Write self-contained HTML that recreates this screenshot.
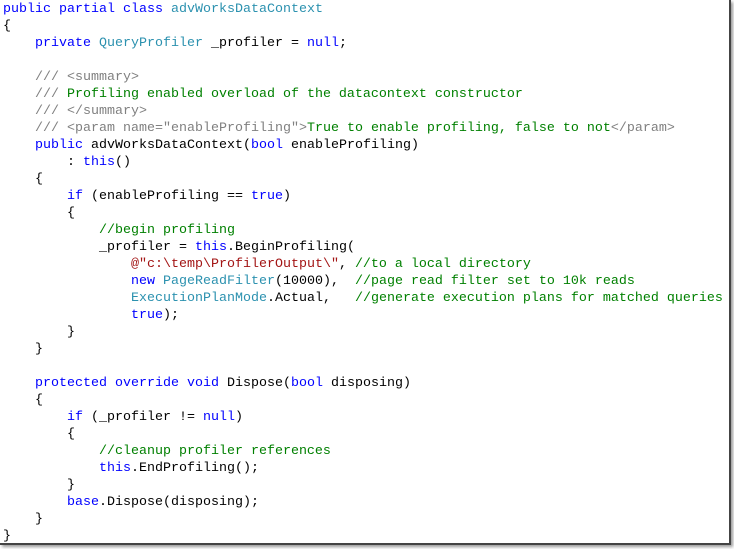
<!DOCTYPE html>
<html><head><meta charset="utf-8"><style>
html,body{margin:0;padding:0;background:#fff;width:734px;height:549px;overflow:hidden}
.frame{position:absolute;left:0;top:0;width:729px;height:543px;border-right:2px solid #444;border-bottom:2px solid #444;box-shadow:2px 2px 3px #999}
pre{position:absolute;left:3px;top:1px;margin:0;font-family:"Liberation Mono",monospace;font-size:13.33px;line-height:17px;color:#000}
.k{color:#0000ff}.t{color:#2b91af}.c{color:#008000}.s{color:#a31515}.g{color:#808080}
</style></head><body><div class="frame"></div>
<pre><span class="k">public</span> <span class="k">partial</span> <span class="k">class</span> <span class="t">advWorksDataContext</span>
{
    <span class="k">private</span> <span class="t">QueryProfiler</span> _profiler = <span class="k">null</span>;

    <span class="g">///</span><span class="c"> </span><span class="g">&lt;summary&gt;</span>
    <span class="g">///</span><span class="c"> Profiling enabled overload of the datacontext constructor</span>
    <span class="g">///</span><span class="c"> </span><span class="g">&lt;/summary&gt;</span>
    <span class="g">///</span><span class="c"> </span><span class="g">&lt;param name="enableProfiling"&gt;</span><span class="c">True to enable profiling, false to not</span><span class="g">&lt;/param&gt;</span>
    <span class="k">public</span> advWorksDataContext(<span class="k">bool</span> enableProfiling)
        : <span class="k">this</span>()
    {
        <span class="k">if</span> (enableProfiling == <span class="k">true</span>)
        {
            <span class="c">//begin profiling</span>
            _profiler = <span class="k">this</span>.BeginProfiling(
                <span class="s">@"c:\temp\ProfilerOutput\"</span>, <span class="c">//to a local directory</span>
                <span class="k">new</span> <span class="t">PageReadFilter</span>(10000),  <span class="c">//page read filter set to 10k reads</span>
                <span class="t">ExecutionPlanMode</span>.Actual,   <span class="c">//generate execution plans for matched queries</span>
                <span class="k">true</span>);
        }
    }

    <span class="k">protected</span> <span class="k">override</span> <span class="k">void</span> Dispose(<span class="k">bool</span> disposing)
    {
        <span class="k">if</span> (_profiler != <span class="k">null</span>)
        {
            <span class="c">//cleanup profiler references</span>
            <span class="k">this</span>.EndProfiling();
        }
        <span class="k">base</span>.Dispose(disposing);
    }
}</pre>
</body></html>
